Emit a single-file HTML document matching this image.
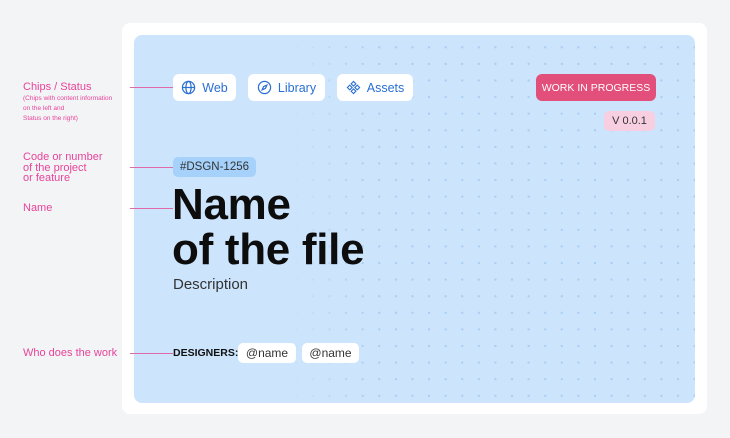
<html><head><style>
body{margin:0;width:730px;height:438px;background:#f3f4f6;font-family:"Liberation Sans",sans-serif;position:relative;overflow:hidden}
.a{position:absolute;white-space:nowrap}
.card{left:122px;top:23px;width:585px;height:391px;background:#fff;border-radius:8px}
.panel{left:134px;top:35px;width:561px;height:368px;border-radius:8px;background:#cce5fd;overflow:hidden}
.dots{left:150px;top:0;width:420px;height:368px;background-image:radial-gradient(circle,#a9cdf3 1px,transparent 1.3px);background-size:16.6px 16.6px;background-position:4px 4px;-webkit-mask-image:linear-gradient(90deg,transparent,#000 20%)}
.chip{background:#fff;border-radius:6px;height:27px;top:74px;display:flex;align-items:center;justify-content:center;gap:6px;color:#2a6fd6;font-size:12.5px}
.lbl{color:#e8449a;font-size:11px;left:23px;line-height:11px}
.ln{height:1px;background:#e06aa8;left:130px;width:43px}
.nm{background:#fff;border-radius:5px;height:20px;top:343px;font-size:12px;color:#333;display:flex;align-items:center;justify-content:center}
</style></head><body>
<div class="a card"></div>
<div class="a panel"><div class="a dots"></div></div>
<div class="a lbl" style="top:82px">Chips / Status</div>
<div class="a lbl" style="top:94px;font-size:6.5px;line-height:10px">(Chips with content information<br>on the left and<br>Status on the right)</div>
<div class="a lbl" style="top:152px;line-height:10.5px">Code or number<br>of the project<br>or feature</div>
<div class="a lbl" style="top:203px">Name</div>
<div class="a lbl" style="top:348px">Who does the work</div>
<div class="a ln" style="top:87px"></div>
<div class="a ln" style="top:167px"></div>
<div class="a ln" style="top:208px"></div>
<div class="a ln" style="top:353px"></div>
<div class="a chip" style="left:173px;width:63px"><svg width="15" height="15" viewBox="0 0 16 16" fill="none" stroke="#2a6fd6" stroke-width="1.3"><circle cx="8" cy="8" r="6.5"/><ellipse cx="8" cy="8" rx="2.8" ry="6.5"/><path d="M1.5 8h13"/></svg>Web</div>
<div class="a chip" style="left:248px;width:77px"><svg width="15" height="15" viewBox="0 0 16 16" fill="none" stroke="#2a6fd6" stroke-width="1.3"><circle cx="8" cy="8" r="6.5"/><path d="M10.5 5.5L9 9 5.5 10.5 7 7z"/></svg>Library</div>
<div class="a chip" style="left:337px;width:76px"><svg width="15" height="15" viewBox="0 0 16 16" fill="none" stroke="#2a6fd6" stroke-width="1.2"><path d="M8 1.5l2.5 2.5L8 6.5 5.5 4zM8 9.5l2.5 2.5L8 14.5 5.5 12zM4 5.5L6.5 8 4 10.5 1.5 8zM12 5.5L14.5 8 12 10.5 9.5 8z"/></svg>Assets</div>
<div class="a" style="left:536px;top:74px;width:120px;height:27px;border-radius:6px;background:#e34f7b;color:#fff;font-size:10.5px;display:flex;align-items:center;justify-content:center">WORK IN PROGRESS</div>
<div class="a" style="left:604px;top:111px;width:51px;height:20px;border-radius:5px;background:#f8cfe0;color:#333;font-size:11px;display:flex;align-items:center;justify-content:center">V 0.0.1</div>
<div class="a" style="left:173px;top:157px;width:83px;height:20px;border-radius:5px;background:#a5d1fb;color:#333;font-size:11.5px;display:flex;align-items:center;justify-content:center">#DSGN-1256</div>
<div class="a" style="left:172px;top:182px;font-size:44px;font-weight:bold;line-height:45px;color:#0d0d0d;letter-spacing:-0.3px">Name<br>of the file</div>
<div class="a" style="left:173px;top:276px;font-size:15px;color:#333">Description</div>
<div class="a" style="left:173px;top:347px;font-size:10.5px;font-weight:bold;color:#111">DESIGNERS:</div>
<div class="a nm" style="left:238px;width:58px">@name</div>
<div class="a nm" style="left:302px;width:57px">@name</div>
</body></html>
